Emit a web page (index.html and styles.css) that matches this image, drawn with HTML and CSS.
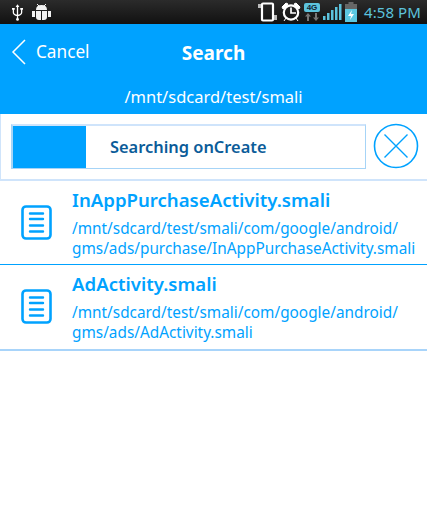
FILE: index.html
```html
<!DOCTYPE html>
<html lang="en">
<head>
<meta charset="utf-8">
<title>Search</title>
<link rel="stylesheet" href="styles.css">
</head>
<body>
<div class="status">
  <div class="status-left">
    <svg class="ic-usb" width="11" height="19" viewBox="0 0 12 18"><path d="M6 1v16M1.500 5v4q0 2.500 4.500 3.500q4.500-1 4.500-3.500V5" fill="none" stroke="#fff" stroke-width="1.400"/><path d="M6 0l2 3H4zM0 4h3v2H0zM9 4h3v2H9z" fill="#fff"/><circle cx="6" cy="16.500" r="1.500" fill="#fff"/></svg>
    <svg class="ic-bug" width="19" height="18" viewBox="0 0 19 18"><path d="M4 7q0-5 5.500-5T15 7zM4 8h5v9H7q-3 0-3-3zM10 8h5v6q0 3-3 3h-2zM0 8h3v6H0zM16 8h3v6h-3z" fill="#f2f2f2"/><path d="M5 1l2 2M14 1l-2 2" stroke="#f2f2f2"/></svg>
  </div>
  <div class="status-right">
    <svg width="20" height="20" viewBox="0 0 20 20"><path d="M0 2h3v4H0z" fill="#bbb"/><rect x="4" y="1.500" width="11" height="17" rx="1" fill="none" stroke="#fff" stroke-width="2.200"/><path d="M16 13h3v5h-3z" fill="#bbb"/></svg>
    <svg width="20" height="20" viewBox="0 0 20 20"><circle cx="10" cy="10.500" r="7.200" fill="none" stroke="#fff" stroke-width="2.200"/><path d="M10 5.500v5.500h5" fill="none" stroke="#fff" stroke-width="1.700"/><path d="M1 5l4-4 2 1-5 5zM19 5l-4-4-2 1 5 5zM5 16l-2 3M15 16l2 3" fill="#fff" stroke="#fff"/></svg>
    <span class="net"><span class="net-badge">4G</span><svg width="14" height="8" viewBox="0 0 14 8"><path d="M3 0l3 3.500H4V8H2V3.500H0zM11 8l-3-3.500h2V0h2v4.500h2z" fill="#777"/></svg></span>
    <svg width="19" height="18" viewBox="0 0 19 18"><path d="M0 13h2.500v4H0zM4 10h2.500v7H4zM8 7h2.500v10H8zM12 4h2.500v13H12zM16 1h2.500v16H16z" fill="#5cc3dd"/></svg>
    <svg width="12" height="20" viewBox="0 0 12 20"><path d="M3.500 0h5v2h-5zM0 2h12v5H0z" fill="#666"/><path d="M0 7h12v13H0z" fill="#5cc8e0"/><path d="M7 8L3 14h3l-1 4 4-6H6z" fill="#fff"/></svg>
    <span class="clock">4:58 PM</span>
  </div>
</div>
<header class="header">
  <div class="title-row">
    <div class="cancel">
      <svg width="15" height="26" viewBox="0 0 15 26"><path d="M14 1L2 13l12 12" fill="none" stroke="#fff" stroke-width="1.500"/></svg>
      <span>Cancel</span>
    </div>
    <h1 class="title">Search</h1>
  </div>
  <div class="path">/mnt/sdcard/test/smali</div>
</header>
<section class="search-panel">
  <div class="progress">
    <div class="progress-fill"></div>
    <div class="progress-label">Searching onCreate</div>
  </div>
  <svg class="stop" width="46" height="46" viewBox="0 0 46 46"><circle cx="23" cy="23" r="21.500" fill="none" stroke="#00a2ff" stroke-width="1.600"/><path d="M11.500 11.500l23 23M34.500 11.500l-23 23" stroke="#00a2ff" stroke-width="1.400"/></svg>
</section>
<ul class="results">
  <li class="result">
    <svg class="doc" width="31" height="35" viewBox="0 0 31 35"><rect x="1.500" y="1.500" width="28" height="32" rx="3.500" fill="none" stroke="#00a2ff" stroke-width="2.600"/><path d="M9 8.500h13M9 14h13M9 20.500h13M9 26.500h13" stroke="#00a2ff" stroke-width="2.400" stroke-linecap="round"/></svg>
    <div class="result-text">
      <div class="result-name">InAppPurchaseActivity.smali</div>
      <div class="result-path">/mnt/sdcard/test/smali/com/google/android/<br>gms/ads/purchase/InAppPurchaseActivity.smali</div>
    </div>
  </li>
  <li class="result">
    <svg class="doc" width="31" height="35" viewBox="0 0 31 35"><rect x="1.500" y="1.500" width="28" height="32" rx="3.500" fill="none" stroke="#00a2ff" stroke-width="2.600"/><path d="M9 8.500h13M9 14h13M9 20.500h13M9 26.500h13" stroke="#00a2ff" stroke-width="2.400" stroke-linecap="round"/></svg>
    <div class="result-text">
      <div class="result-name">AdActivity.smali</div>
      <div class="result-path">/mnt/sdcard/test/smali/com/google/android/<br>gms/ads/AdActivity.smali</div>
    </div>
  </li>
</ul>
</body>
</html>
```
FILE: styles.css
```css
* { box-sizing: border-box; }
html, body { margin: 0; padding: 0; }
body { width: 427px; height: 512px; background: #fff; overflow: hidden; font-family: "Noto Sans", "Liberation Sans", sans-serif; }
.status { height: 24px; background: linear-gradient(#2b2b2b, #111); display: flex; justify-content: space-between; align-items: center; padding: 0 6px 0 12px; }
.status-left { display: flex; align-items: center; gap: 9px; }
.status-right { display: flex; align-items: center; gap: 3px; }
.net { display: flex; flex-direction: column; align-items: center; gap: 1px; width: 16px; }
.net-badge { background: #5cc3dd; color: #123; font: bold 8px/9px "Liberation Sans", sans-serif; border-radius: 2px; padding: 0 3px; }
.clock { color: #5cc3dd; font-size: 15px; line-height: 20px; margin-left: 4px; letter-spacing: .1px; }
.header { height: 90px; background: #00a2ff; color: #fff; display: flex; flex-direction: column; }
.title-row { position: relative; height: 56px; display: flex; align-items: center; justify-content: center; }
.cancel { position: absolute; left: 11px; top: 15px; display: flex; align-items: center; gap: 10px; font-size: 17.200px; line-height: 26px; }
.title { margin: 2px 0 0; font-size: 19px; font-weight: 700; line-height: 26px; }
.path { text-align: center; font-size: 16.500px; line-height: 20px; margin-top: 7px; }
.search-panel { height: 67px; border: 1px solid #cfe4fb; border-width: 0 0 2px 1px; display: flex; align-items: center; padding: 0 8px 1px 10px; justify-content: space-between; }
.progress { position: relative; width: 355px; height: 45px; border: 1px solid #a6d4f7; border-width: 2px 1px 1px 2px; border-top-color: #cfe4fb; background: #fff; }
.progress-fill { width: 73px; height: 100%; background: #00a2ff; }
.progress-label { position: absolute; left: 97px; top: 8px; color: #0b5c99; font-size: 16.400px; font-weight: 600; line-height: 26px; white-space: nowrap; }
.results { list-style: none; margin: 0; padding: 0; }
.result { height: 84px; border-bottom: 1px solid #00a2ff; display: flex; align-items: flex-start; padding: 5px 0 0 21px; gap: 20px; color: #00a2ff; }
.result + .result { height: 86px; border-bottom-color: #a8d4fa; border-bottom-width: 2px; }
.doc { margin-top: 19px; flex: none; }
.result-name { font-size: 18.600px; font-weight: 600; line-height: 28px; white-space: nowrap; }
.result-path { font-size: 15.350px; line-height: 20px; margin-top: 4px; white-space: nowrap; }
```
